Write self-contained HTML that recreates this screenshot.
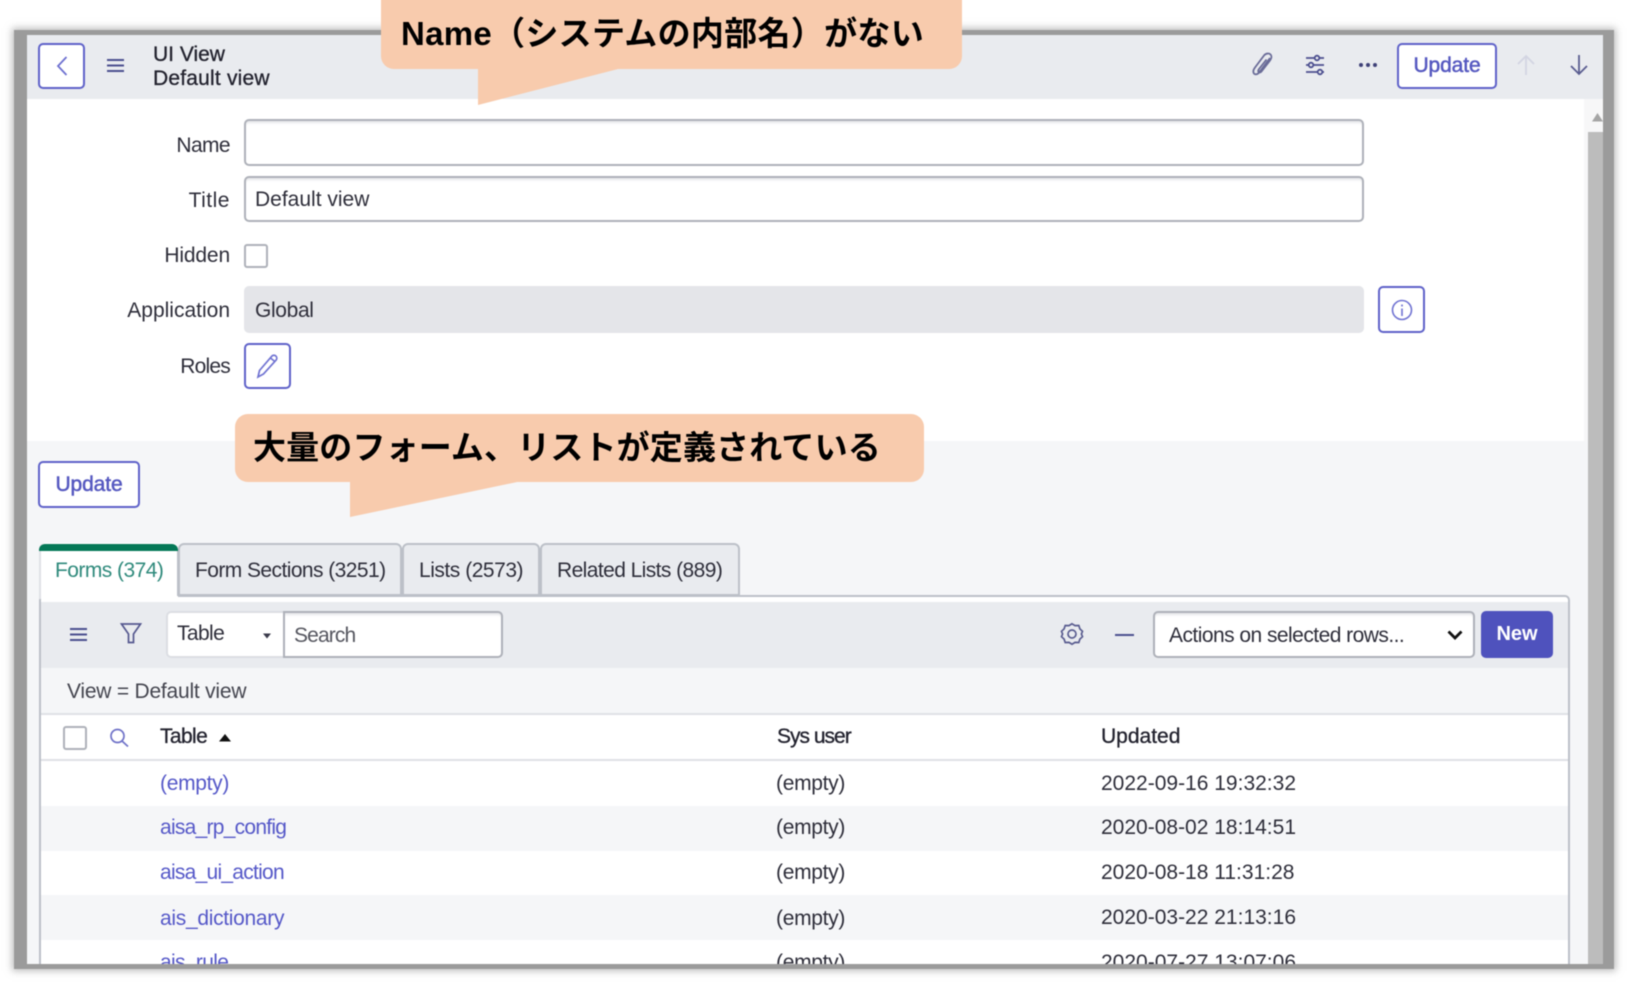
<!DOCTYPE html>
<html lang="ja"><head><meta charset="utf-8"><title>UI View</title>
<style>
html,body{margin:0;padding:0;background:#fff}
body{width:1630px;height:984px;overflow:hidden;position:relative;font-family:"Liberation Sans","Noto Sans CJK JP",sans-serif;font-size:21px;color:#2e2e3a;filter:blur(.4px)}
div,svg,a{position:absolute;box-sizing:border-box}
.t{white-space:nowrap;line-height:28px;height:28px}
.r{text-align:right}
.inp{background:#fff;border:2px solid #aeb1b9;border-radius:5px;box-shadow:inset 0 3px 2px -1px #e6e7ea}
.btn{background:#fff;border:2px solid #5f62c9;border-radius:5px}
.cb{background:#fff;border:2px solid #aeb1b9;border-radius:3px}
.tab{background:#e9ebef;border:2px solid #bcc0c8;border-radius:6px 6px 0 0;top:543px;height:53px}
.l{color:#5558c8}
.call{background:#f8cbad;border-radius:13px}
.ct{color:#000;font-weight:700;white-space:nowrap;font-family:"Liberation Sans","Noto Sans CJK JP",sans-serif;line-height:44px}
.h{font-weight:400;color:#22222e;-webkit-text-stroke:.3px #22222e}
</style></head><body>

<!-- window -->
<div style="left:14px;top:30px;width:1600px;height:939px;background:#9b9b9b;box-shadow:0 0 7px 2px rgba(155,155,155,.65)"></div>
<div style="left:27px;top:35px;width:1576px;height:929px;background:#fff;overflow:hidden"></div>
<div style="left:27px;top:35px;width:1576px;height:64px;background:#e9ebef"></div>
<div style="left:27px;top:441px;width:1561px;height:523px;background:#f5f6f8"></div>

<!-- scrollbar -->
<div style="left:1584px;top:99px;width:19px;height:342px;background:#f7f7f8"></div>
<div style="left:1588px;top:132px;width:15px;height:832px;background:#bcbcbc"></div>
<svg style="left:1592px;top:113px" width="11" height="9"><path d="M0 8.500L5.500 0L11 8.500Z" fill="#a5a5a5"/></svg>

<!-- header -->
<div class="btn" style="left:38px;top:43px;width:47px;height:46px"></div>
<svg style="left:52px;top:52px" width="20" height="28" fill="none" stroke="#6d70d0" stroke-width="1.800"><path d="M14.500 5L6 14L14.500 23"/></svg>
<svg style="left:106px;top:58px" width="20" height="16" stroke="#4c4f8f" stroke-width="2"><path d="M1 2H18M1 7.500H18M1 13H18"/></svg>
<div class="t" style="left:153px;top:41px;color:#22222e;-webkit-text-stroke:.3px #22222e">UI View</div>
<div class="t" style="left:153px;top:65px;color:#22222e;-webkit-text-stroke:.3px #22222e;letter-spacing:.2px">Default view</div>

<svg style="left:1249px;top:51px" width="26" height="28" fill="none" stroke="#6a6c98" stroke-width="1.800"><path d="M21 7L10.500 21C8.500 24 5 24 4.500 21.500C4 20 4.500 18.500 6 16.500L15 4.500C16.800 2.200 20 2 21.500 3.500C23 5 22.500 7.500 21 9.500L12.500 20.500C11.500 21.800 10 21.800 9.500 21C9 20.300 9.300 19 10 18L17.500 8.500"/></svg>
<svg style="left:1303px;top:53px" width="24" height="24" fill="none" stroke="#4c4f8f" stroke-width="1.800"><path d="M3 5H21M3 12H21M3 19H21"/><circle cx="14" cy="5" r="2.300" fill="#e9ebef"/><circle cx="8" cy="12" r="2.300" fill="#e9ebef"/><circle cx="17" cy="19" r="2.300" fill="#e9ebef"/></svg>
<svg style="left:1358px;top:60px" width="20" height="10" fill="#3f4178"><circle cx="3" cy="5" r="2"/><circle cx="10" cy="5" r="2"/><circle cx="17" cy="5" r="2"/></svg>
<div class="btn" style="left:1397px;top:43px;width:100px;height:46px"></div>
<div class="t l" style="left:1397px;top:52px;width:100px;text-align:center;font-size:21px;color:#5558c0;-webkit-text-stroke:.5px #5558c0;letter-spacing:-.1px">Update</div>
<svg style="left:1515px;top:54px" width="22" height="22" fill="none" stroke="#d3d5e2" stroke-width="1.800"><path d="M11 21V2M3 10L11 2L19 10"/></svg>
<svg style="left:1568px;top:54px" width="22" height="22" fill="none" stroke="#5a5d90" stroke-width="1.800"><path d="M11 1V20M3 12L11 20L19 12"/></svg>

<!-- form -->
<div class="t r" style="left:100px;width:130px;top:132px;letter-spacing:-.6px">Name</div>
<div class="t r" style="left:100px;width:130px;top:187px;letter-spacing:.5px">Title</div>
<div class="t r" style="left:100px;width:130px;top:242px;letter-spacing:-.15px">Hidden</div>
<div class="t r" style="left:100px;width:130px;top:297px">Application</div>
<div class="t r" style="left:100px;width:130px;top:353px;letter-spacing:-.8px">Roles</div>
<div class="inp" style="left:244px;top:119px;width:1120px;height:47px"></div>
<div class="inp" style="left:244px;top:176px;width:1120px;height:46px"></div>
<div class="t" style="left:255px;top:186px">Default view</div>
<div class="cb" style="left:244px;top:244px;width:24px;height:24px"></div>
<div style="left:244px;top:286px;width:1120px;height:47px;background:#e4e5e9;border-radius:5px"></div>
<div class="t" style="left:255px;top:297px;letter-spacing:-.35px">Global</div>
<div class="btn" style="left:1378px;top:286px;width:47px;height:47px"></div>
<svg style="left:1390px;top:298px" width="24" height="24" fill="none" stroke="#7073d2" stroke-width="1.600"><circle cx="12" cy="12" r="9.500"/><path d="M12 10.500V18M12 6.500V8.500"/></svg>
<div class="btn" style="left:244px;top:343px;width:47px;height:46px"></div>
<svg style="left:255px;top:353px" width="26" height="26" fill="none" stroke="#7073d2" stroke-width="1.700"><path d="M3 24L4.500 17.500L17 3C18 2 20 2 21 3.200C22 4.200 22 5.800 21.300 6.800L8.500 21L3 24ZM15.500 5L19.800 8.500"/></svg>

<div class="btn" style="left:38px;top:461px;width:102px;height:47px"></div>
<div class="t" style="left:38px;top:471px;width:102px;text-align:center;font-size:21px;color:#5558c0;-webkit-text-stroke:.5px #5558c0;letter-spacing:-.1px">Update</div>

<!-- tabs -->
<div style="left:39px;top:595px;width:1531px;height:369px;background:#fff;border:2px solid #bcc0c8;border-bottom:none;border-radius:5px 5px 0 0"></div>
<div class="tab" style="left:178px;width:224px"></div>
<div class="tab" style="left:402px;width:138px"></div>
<div class="tab" style="left:540px;width:200px"></div>
<div style="left:39px;top:543px;width:139px;height:56px;background:#fff;border-radius:6px 6px 0 0;border-left:2px solid #dfe1e6"></div>
<div style="left:39px;top:544px;width:139px;height:7px;background:#047857;border-radius:6px 6px 0 0"></div>
<div style="left:177px;top:551px;width:2px;height:45px;background:#bcc0c8"></div>
<div class="t" style="left:55px;top:557px;color:#2f8a7c;letter-spacing:-.55px">Forms (374)</div>
<div class="t" style="left:195px;top:557px;letter-spacing:-.57px">Form Sections (3251)</div>
<div class="t" style="left:419px;top:557px;letter-spacing:-.47px">Lists (2573)</div>
<div class="t" style="left:557px;top:557px;letter-spacing:-.58px">Related Lists (889)</div>

<!-- toolbar -->
<div style="left:41px;top:602px;width:1527px;height:66px;background:#e9ebef"></div>
<svg style="left:69px;top:627px" width="20" height="15" stroke="#4c4f8f" stroke-width="2"><path d="M1 2H18M1 7.500H18M1 13H18"/></svg>
<svg style="left:120px;top:622px" width="22" height="23" fill="none" stroke="#55588f" stroke-width="1.700"><path d="M1.500 2H20.500L13.500 12V20.500H8.500V12Z"/></svg>
<div style="left:166px;top:611px;width:118px;height:47px;background:#fff;border:2px solid #dcdee3;border-right:none;border-radius:5px 0 0 5px"></div>
<div class="t" style="left:177px;top:620px;letter-spacing:-.6px">Table</div>
<svg style="left:263px;top:633px" width="8" height="6"><path d="M0 .500H8L4 5.500Z" fill="#3a3a4a"/></svg>
<div class="inp" style="left:283px;top:611px;width:220px;height:47px;border-radius:0 5px 5px 0"></div>
<div class="t" style="left:294px;top:622px;color:#55565f;letter-spacing:-.87px">Search</div>
<svg style="left:1060px;top:622px" width="24" height="24" fill="none" stroke="#5a5d90" stroke-width="1.700"><path d="M12 1.800L15 3.600L18.800 3.500L19.900 6.900L22.500 9.300L21.400 12L22.500 14.700L19.900 17.100L18.800 20.500L15 20.400L12 22.200L9 20.400L5.200 20.500L4.100 17.100L1.500 14.700L2.600 12L1.500 9.300L4.100 6.900L5.200 3.500L9 3.600Z"/><circle cx="12" cy="12" r="4"/></svg>
<div style="left:1115px;top:634px;width:19px;height:2px;background:#4c4f8f"></div>
<div class="inp" style="left:1153px;top:611px;width:322px;height:47px"></div>
<div class="t" style="left:1169px;top:622px;letter-spacing:-.54px">Actions on selected rows...</div>
<svg style="left:1446px;top:629px" width="18" height="12" fill="none" stroke="#111" stroke-width="2.800"><path d="M2.500 2.500L9 9L15.500 2.500"/></svg>
<div style="left:1481px;top:611px;width:72px;height:47px;background:#4f52bd;border-radius:5px"></div>
<div class="t" style="left:1481px;top:620px;width:72px;text-align:center;color:#fff;font-weight:700;font-size:20px">New</div>

<!-- filter row -->
<div style="left:41px;top:668px;width:1527px;height:45px;background:#f5f6f8"></div>
<div class="t" style="left:67px;top:678px;color:#44454f;letter-spacing:-.22px">View = Default view</div>
<div style="left:41px;top:713px;width:1527px;height:2px;background:#dfe1e6"></div>

<!-- header row -->
<div class="cb" style="left:63px;top:726px;width:24px;height:24px"></div>
<svg style="left:109px;top:728px" width="21" height="20" fill="none" stroke="#6f72c8" stroke-width="1.700"><circle cx="8.500" cy="8" r="6.500"/><path d="M13 13L19 18.500"/></svg>
<div class="t h" style="left:160px;top:723px;letter-spacing:-.6px">Table</div>
<svg style="left:219px;top:734px" width="12" height="8"><path d="M0 7.500L6 0L12 7.500Z" fill="#111"/></svg>
<div class="t h" style="left:777px;top:723px;letter-spacing:-1px">Sys user</div>
<div class="t h" style="left:1101px;top:723px">Updated</div>
<div style="left:41px;top:759px;width:1527px;height:2px;background:#dfe1e6"></div>

<!-- rows -->
<div style="left:41px;top:806px;width:1527px;height:45px;background:#f5f6f8"></div>
<div style="left:41px;top:895px;width:1527px;height:45px;background:#f5f6f8"></div>
<div class="t l" style="left:160px;top:770px;letter-spacing:-.3px">(empty)</div>
<div class="t" style="left:776px;top:770px;letter-spacing:-.3px">(empty)</div>
<div class="t" style="left:1101px;top:770px">2022-09-16 19:32:32</div>
<div class="t l" style="left:160px;top:814px;letter-spacing:-.74px">aisa_rp_config</div>
<div class="t" style="left:776px;top:814px;letter-spacing:-.3px">(empty)</div>
<div class="t" style="left:1101px;top:814px">2020-08-02 18:14:51</div>
<div class="t l" style="left:160px;top:859px;letter-spacing:-.74px">aisa_ui_action</div>
<div class="t" style="left:776px;top:859px;letter-spacing:-.3px">(empty)</div>
<div class="t" style="left:1101px;top:859px">2020-08-18 11:31:28</div>
<div class="t l" style="left:160px;top:905px;letter-spacing:-.3px">ais_dictionary</div>
<div class="t" style="left:776px;top:905px;letter-spacing:-.3px">(empty)</div>
<div class="t" style="left:1101px;top:904px">2020-03-22 21:13:16</div>
<div style="left:41px;top:940px;width:1527px;height:24px;overflow:hidden">
<div class="t l" style="left:119px;top:9px;letter-spacing:-.65px">ais_rule</div>
<div class="t" style="left:735px;top:9px;letter-spacing:-.3px">(empty)</div>
<div class="t" style="left:1060px;top:9px">2020-07-27 13:07:06</div>
</div>

<!-- callouts -->
<svg style="left:0;top:0" width="1630" height="984"><path d="M478 68L478 105L622 68Z" fill="#f8cbad"/><path d="M350 481L350 517L522 481Z" fill="#f8cbad"/></svg>
<div class="call" style="left:381px;top:-14px;width:581px;height:83px"></div>
<div class="ct" style="left:401px;top:12px;font-size:33px;letter-spacing:.3px">Name（システムの内部名）がない</div>
<div class="call" style="left:235px;top:414px;width:689px;height:68px"></div>
<div class="ct" style="left:253px;top:426px;font-size:33px;letter-spacing:.15px">大量のフォーム、リストが定義されている</div>

</body></html>
